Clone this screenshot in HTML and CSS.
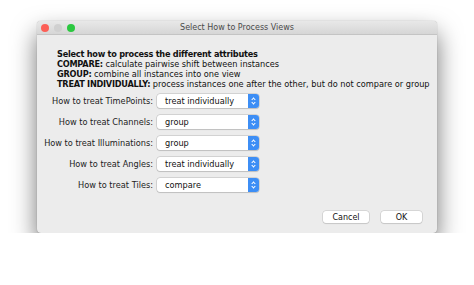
FILE: index.html
```html
<!DOCTYPE html>
<html lang="en">
<head>
    <meta charset="UTF-8">
    <title>Select How to Process Views</title>
    <link rel="stylesheet" href="styles.css">
</head>
<body>
    <div class="stage">
        <div class="window">
            <div class="titlebar">
                <div class="lights">
                    <span class="light red"></span>
                    <span class="light gray"></span>
                    <span class="light green"></span>
                </div>
                <div class="title">Select How to Process Views</div>
            </div>
            <div class="content">
                <div class="intro">
                    <div class="heading">Select how to process the different attributes</div>
                    <div><b>COMPARE:</b> calculate pairwise shift between instances</div>
                    <div><b>GROUP:</b> combine all instances into one view</div>
                    <div><b>TREAT INDIVIDUALLY:</b> process instances one after the other, but do not compare or group</div>
                </div>
                <div class="form">
                    <label>How to treat TimePoints:</label>
                    <div class="select"><span>treat individually</span><span class="arrows"></span></div>
                    <label>How to treat Channels:</label>
                    <div class="select"><span>group</span><span class="arrows"></span></div>
                    <label>How to treat Illuminations:</label>
                    <div class="select"><span>group</span><span class="arrows"></span></div>
                    <label>How to treat Angles:</label>
                    <div class="select"><span>treat individually</span><span class="arrows"></span></div>
                    <label>How to treat Tiles:</label>
                    <div class="select"><span>compare</span><span class="arrows"></span></div>
                </div>
                <div class="buttons">
                    <button class="cancel">Cancel</button>
                    <button class="ok">OK</button>
                </div>
            </div>
        </div>
    </div>
</body>
</html>
```
FILE: styles.css
```css
body {
    margin: 0;
    background-color: #fff;
    font-family: "DejaVu Sans", sans-serif;
}
.stage {
    padding: 21px 0 0 37px;
}
.window {
    width: 400px;
    height: 212px;
    border-radius: 4px;
    background-color: #ececec;
    box-shadow: 0 12px 24px rgba(0, 0, 0, 0.55), 0 0 1px rgba(0, 0, 0, 0.4);
    overflow: hidden;
}
.titlebar {
    height: 13px;
    display: flex;
    align-items: center;
    position: relative;
    background: linear-gradient(#e8e8e8, #d6d6d6);
    border-bottom: 1px solid #c4c4c4;
}
.lights {
    display: flex;
    gap: 5px;
    padding-left: 4px;
}
.light {
    width: 8px;
    height: 8px;
    border-radius: 50%;
}
.red {
    background-color: #fc5f57;
}
.gray {
    background-color: #d0d0d0;
}
.green {
    background-color: #2bc840;
}
.title {
    position: absolute;
    left: 0;
    right: 0;
    text-align: center;
    font-size: 8px;
    color: #4a4a4a;
}
.content {
    padding: 14px 15px 0 20px;
    font-size: 8.2px;
    color: #111;
}
.intro {
    line-height: 10px;
    white-space: nowrap;
}
.intro b,
.heading {
    font-weight: bold;
    letter-spacing: -0.25px;
}
.form {
    display: grid;
    grid-template-columns: 110px 102px;
    column-gap: 4px;
    row-gap: 7px;
    align-items: center;
    margin: 5px 0 0 -14px;
    white-space: nowrap;
}
.form label {
    text-align: right;
    color: #222;
}
.select {
    height: 14px;
    display: flex;
    align-items: center;
    justify-content: space-between;
    background-color: #fff;
    border-radius: 3px;
    box-shadow: 0 0 0 0.5px #b8b8b8, 0 1px 1px rgba(0, 0, 0, 0.15);
    padding-left: 8px;
    color: #111;
}
.arrows {
    width: 11px;
    height: 14px;
    background-color: #3d8ef5;
    border-radius: 0 3px 3px 0;
    position: relative;
}
.arrows::before,
.arrows::after {
    content: "";
    position: absolute;
    left: 4px;
    width: 2px;
    height: 2px;
    border-left: 1px solid #fff;
    border-top: 1px solid #fff;
}
.arrows::before {
    top: 4px;
    transform: rotate(45deg);
}
.arrows::after {
    top: 7px;
    transform: rotate(225deg);
}
.buttons {
    display: flex;
    justify-content: flex-end;
    gap: 12px;
    margin-top: 19px;
}
button {
    height: 12px;
    border: none;
    border-radius: 3px;
    background-color: #fff;
    box-shadow: 0 0 0 0.5px #c0c0c0, 0 1px 1px rgba(0, 0, 0, 0.12);
    font-family: "DejaVu Sans", sans-serif;
    font-size: 8px;
    color: #111;
    padding: 0;
}
.cancel {
    width: 46px;
}
.ok {
    width: 41px;
}
```
